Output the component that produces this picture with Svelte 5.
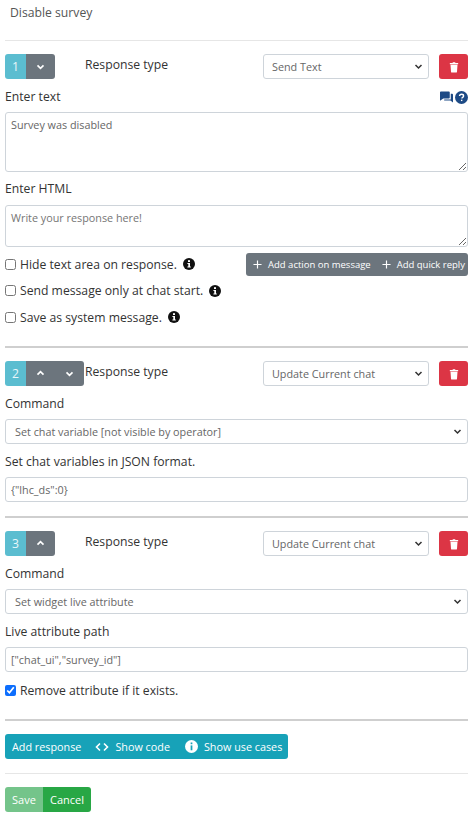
<script lang="ts">
  interface Step {
    n: number;
    up: boolean;
    down: boolean;
    type: string;
  }

  const chevronUp = 'M2 7.5 L6 3.5 L10 7.5';
  const chevronDown = 'M2 4.5 L6 8.5 L10 4.5';
  const steps: Step[] = [
    { n: 1, up: false, down: true, type: 'Send Text' },
    { n: 2, up: true, down: true, type: 'Update Current chat' },
    { n: 3, up: true, down: false, type: 'Update Current chat' }
  ];
</script>

{#snippet info()}
  <svg class="info" viewBox="0 0 12 12" aria-hidden="true">
    <circle cx="6" cy="6" r="6" fill="#111" />
    <rect x="5" y="2.2" width="2" height="1.8" fill="#fff" />
    <path d="M4.4 5h2.6v3.6h.8v1H4.4v-1h.9V6h-.9z" fill="#fff" />
  </svg>
{/snippet}

{#snippet plus()}
  <svg class="plus" viewBox="0 0 10 10" aria-hidden="true"><path d="M5 .5v9M.5 5h9" /></svg>
{/snippet}

{#snippet head(step: Step)}
  <div class="head">
    <div class="left">
      <div class="group">
        <span class="num">{step.n}</span>
        {#if step.up}
          <button class="arrow" aria-label="Move up">
            <svg viewBox="0 0 12 12"><path d={chevronUp} /></svg>
          </button>
        {/if}
        {#if step.down}
          <button class="arrow" aria-label="Move down">
            <svg viewBox="0 0 12 12"><path d={chevronDown} /></svg>
          </button>
        {/if}
      </div>
    </div>
    <span class="type-label">Response type</span>
    <select class="ctl type-select">
      <option>{step.type}</option>
    </select>
    <button class="trash" aria-label="Delete">
      <svg viewBox="0 0 12 14">
        <path d="M1 2.2h3.2l.5-1h2.6l.5 1H11v1.4H1zM1.8 4.4h8.4l-.6 8.2q-.1 1-1 1H3.4q-.9 0-1-1z" fill="#fff" />
      </svg>
    </button>
  </div>
{/snippet}

<div class="page">
  <div class="title">Disable survey</div>
  <hr class="thin first" />

  {@render head(steps[0])}
  <div class="label-row">
    <label for="txt">Enter text</label>
    <span class="helpers">
      <svg class="chat" viewBox="0 0 14 12" aria-hidden="true">
        <path d="M0 1q0-1 1-1h8.500q1 0 1 1v5.500q0 1-1 1H3.500L0 10z" fill="#1d4a85" />
        <path d="M11.600 2.500H13q1 0 1 1V12l-2.800-2.300H4.500V8.600h7.100z" fill="#1d4a85" />
      </svg>
      <svg class="help" viewBox="0 0 12 12" aria-hidden="true">
        <circle cx="6" cy="6" r="6" fill="#1d4a85" />
        <path d="M4.200 4.700q0-1.700 1.900-1.700 1.800 0 1.800 1.500 0 .9-.9 1.400-.6.400-.6 1" fill="none" stroke="#fff" stroke-width="1.300" />
        <rect x="5.500" y="8" width="1.300" height="1.300" fill="#fff" />
      </svg>
    </span>
  </div>
  <textarea id="txt" class="ctl tall">Survey was disabled</textarea>

  <label class="field-label html-label" for="html">Enter HTML</label>
  <textarea id="html" class="ctl short" placeholder="Write your response here!"></textarea>

  <div class="options">
    <div class="checks">
      <label class="check"><input type="checkbox" />Hide text area on response.{@render info()}</label>
      <label class="check"><input type="checkbox" />Send message only at chat start.{@render info()}</label>
      <label class="check"><input type="checkbox" />Save as system message.{@render info()}</label>
    </div>
    <div class="quick">
      <button>{@render plus()}Add action on message</button>
      <button>{@render plus()}Add quick reply</button>
    </div>
  </div>

  <hr class="thick" />

  {@render head(steps[1])}
  <label class="field-label" for="cmd2">Command</label>
  <select id="cmd2" class="ctl wide"><option>Set chat variable [not visible by operator]</option></select>
  <label class="field-label" for="json">Set chat variables in JSON format.</label>
  <input id="json" class="ctl wide" value={'{"lhc_ds":0}'} />

  <hr class="thick" />

  {@render head(steps[2])}
  <label class="field-label" for="cmd3">Command</label>
  <select id="cmd3" class="ctl wide"><option>Set widget live attribute</option></select>
  <label class="field-label" for="path">Live attribute path</label>
  <input id="path" class="ctl wide" value={'["chat_ui","survey_id"]'} />
  <label class="check remove"><input type="checkbox" checked />Remove attribute if it exists.</label>

  <hr class="thick" />

  <div class="actions">
    <button>Add response</button>
    <button class="code-btn">
      <svg class="code" viewBox="0 0 14 10" aria-hidden="true"><path d="M5 1.500 1.500 5 5 8.500M9 1.500 12.500 5 9 8.500" /></svg>
      Show code
    </button>
    <button>
      <svg class="use" viewBox="0 0 12 12" aria-hidden="true">
        <circle cx="6" cy="6" r="6" fill="#fff" />
        <rect x="5.200" y="2.300" width="1.600" height="1.600" fill="#17a2b8" />
        <rect x="5.200" y="5" width="1.600" height="4.500" fill="#17a2b8" />
      </svg>
      Show use cases
    </button>
  </div>

  <hr class="thin last" />

  <div class="save">
    <button class="save-btn">Save</button>
    <button class="cancel-btn">Cancel</button>
  </div>
</div>

<style>
  :global(body) {
    margin: 0;
    background: #fff;
  }

  .page {
    display: flex;
    flex-direction: column;
    box-sizing: border-box;
    width: 474px;
    height: 821px;
    overflow: hidden;
    padding: 0 6px 0 5px;
    font-family: "Open Sans", "Liberation Sans", sans-serif;
    font-size: 12.2px;
    color: #333;
  }

  .title {
    height: 26px;
    line-height: 26px;
    padding-left: 5px;
    color: #555;
  }

  hr {
    width: 100%;
    margin: 0;
    border: 0;
    flex: none;
  }

  .thin {
    height: 1px;
    background: #e6e6e6;
  }

  .first {
    margin-top: 14px;
    margin-bottom: 13px;
  }

  .last {
    margin-top: 14px;
    margin-bottom: 13px;
  }

  .thick {
    height: 2px;
    background: #cfcfcf;
    margin-top: 14px;
    margin-bottom: 13px;
  }

  .head {
    display: flex;
    align-items: flex-start;
    height: 25px;
    flex: none;
  }

  .left {
    width: 80px;
  }

  .group {
    display: inline-flex;
    height: 25px;
    border-radius: 3px;
    overflow: hidden;
  }

  .num {
    width: 21px;
    display: flex;
    align-items: center;
    justify-content: center;
    background: #5bbdd0;
    color: #eaf7fa;
  }

  .arrow {
    width: 29px;
    padding: 0;
    border: 0;
    display: flex;
    align-items: center;
    justify-content: center;
    background: #6c757d;
  }

  .arrow svg {
    width: 9px;
    height: 9px;
    fill: none;
    stroke: #fff;
    stroke-width: 2.2;
  }

  .type-label {
    flex: 1;
    padding-top: 2px;
    line-height: 18px;
  }

  .ctl {
    box-sizing: border-box;
    border: 1px solid #ced4da;
    border-radius: 3px;
    background-color: #fff;
    color: #666;
    font-family: inherit;
    font-size: 10.8px;
    outline: none;
    flex: none;
  }

  select.ctl {
    appearance: none;
    padding: 0 8px;
    background-image: url("data:image/svg+xml,%3Csvg xmlns='http://www.w3.org/2000/svg' viewBox='0 0 12 12'%3E%3Cpath d='M2 4l4 4 4-4' fill='none' stroke='%23333' stroke-width='2'/%3E%3C/svg%3E");
    background-repeat: no-repeat;
    background-position: right 5px center;
    background-size: 9px;
  }

  .type-select {
    width: 166px;
    height: 25px;
    padding-left: 8px;
  }

  .trash {
    width: 29px;
    height: 25px;
    margin-left: 10px;
    padding: 0;
    border: 0;
    border-radius: 3px;
    background: #dc3545;
    display: flex;
    align-items: center;
    justify-content: center;
  }

  .trash svg {
    width: 10px;
    height: 12px;
  }

  .label-row {
    display: flex;
    justify-content: space-between;
    align-items: center;
    height: 33px;
    padding-top: 1px;
    box-sizing: border-box;
    flex: none;
  }

  .helpers {
    display: flex;
    gap: 2px;
    align-items: center;
    margin-top: 2px;
  }

  .chat {
    width: 13px;
    height: 12px;
  }

  .help {
    width: 13px;
    height: 13px;
  }

  textarea.ctl {
    width: 100%;
    padding: 4px 5px;
    display: block;
  }

  .tall {
    height: 60px;
  }

  .short {
    height: 42px;
  }

  .field-label {
    display: block;
    height: 33px;
    line-height: 36px;
    flex: none;
  }

  .html-label {
    line-height: 34px;
  }

  .wide {
    width: 100%;
    height: 25px;
    padding: 0 5px;
  }

  select.wide {
    padding-left: 9px;
  }

  .options {
    display: flex;
    justify-content: space-between;
    align-items: flex-start;
    padding-top: 6px;
    height: 85px;
    box-sizing: border-box;
    flex: none;
  }

  .checks {
    display: flex;
    flex-direction: column;
    gap: 6.5px;
    padding-top: 1px;
  }

  .check {
    display: flex;
    align-items: center;
    gap: 4px;
    height: 20px;
    white-space: pre;
  }

  .check input {
    width: 11px;
    height: 11px;
    margin: 0;
    accent-color: #0d6efd;
  }

  .info {
    width: 12px;
    height: 12px;
    margin-left: 2px;
  }

  .remove {
    margin-top: 8px;
    margin-bottom: 5px;
    height: 20px;
    flex: none;
  }

  .quick {
    display: flex;
    height: 23px;
    width: 222px;
    background: #6c757d;
    border-radius: 3px;
    justify-content: space-between;
    overflow: hidden;
  }

  .quick button {
    display: flex;
    align-items: center;
    padding: 0 4px 0 7px;
    border: 0;
    background: none;
    color: #fff;
    font-family: inherit;
    font-size: 9.5px;
    white-space: nowrap;
  }

  .plus {
    width: 9px;
    height: 9px;
    margin-right: 6px;
    fill: none;
    stroke: #fff;
    stroke-width: 1.300;
  }

  .actions {
    display: flex;
    width: 283px;
    height: 25px;
    background: #17a2b8;
    border-radius: 3px;
    overflow: hidden;
    flex: none;
  }

  .actions button {
    display: flex;
    align-items: center;
    gap: 6px;
    padding: 0 7px;
    border: 0;
    background: none;
    color: #fff;
    font-family: inherit;
    font-size: 10.8px;
    white-space: nowrap;
  }

  .actions .code-btn {
    padding-right: 8px;
  }

  .code {
    width: 14px;
    height: 10px;
    fill: none;
    stroke: #fff;
    stroke-width: 1.600;
  }

  .use {
    width: 13px;
    height: 13px;
  }

  .save {
    display: flex;
    height: 25px;
    width: 86px;
    border-radius: 3px;
    overflow: hidden;
    flex: none;
  }

  .save button {
    border: 0;
    padding: 0;
    color: #fff;
    font-family: inherit;
    font-size: 11px;
  }

  .save-btn {
    width: 38px;
    background: #74c48a;
  }

  .cancel-btn {
    flex: 1;
    background: #28a745;
  }
</style>
